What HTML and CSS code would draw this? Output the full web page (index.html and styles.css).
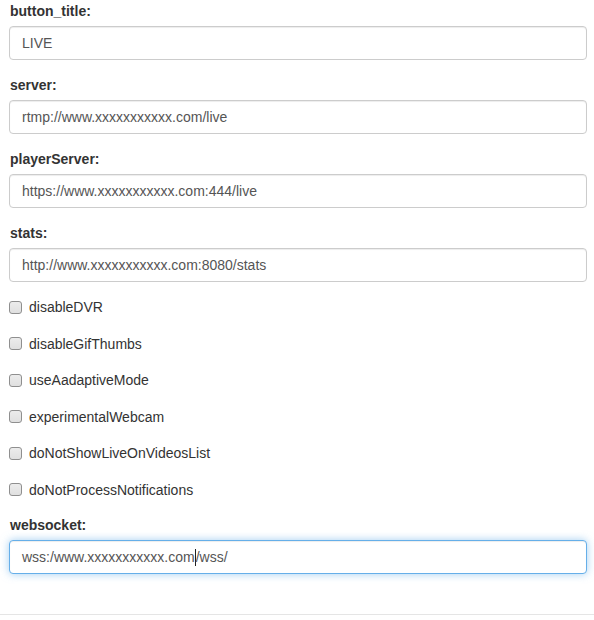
FILE: index.html
```html
<!DOCTYPE html>
<html lang="en">
<head>
<meta charset="utf-8">
<title>Live settings</title>
<link rel="stylesheet" href="styles.css">
</head>
<body>
<div class="panel">
  <form class="form">
    <div class="form-group">
      <label class="field-label" for="button_title">button_title:</label>
      <input class="form-control" id="button_title" type="text" value="LIVE">
    </div>
    <div class="form-group">
      <label class="field-label" for="server">server:</label>
      <input class="form-control" id="server" type="text" value="rtmp://www.xxxxxxxxxxx.com/live">
    </div>
    <div class="form-group">
      <label class="field-label" for="playerServer">playerServer:</label>
      <input class="form-control" id="playerServer" type="text" value="https://www.xxxxxxxxxxx.com:444/live">
    </div>
    <div class="form-group">
      <label class="field-label" for="stats">stats:</label>
      <input class="form-control" id="stats" type="text" value="http://www.xxxxxxxxxxx.com:8080/stats">
    </div>
    <div class="checks">
      <label class="check"><input type="checkbox" class="check-box"><span>disableDVR</span></label>
      <label class="check"><input type="checkbox" class="check-box"><span>disableGifThumbs</span></label>
      <label class="check"><input type="checkbox" class="check-box"><span>useAadaptiveMode</span></label>
      <label class="check"><input type="checkbox" class="check-box"><span>experimentalWebcam</span></label>
      <label class="check"><input type="checkbox" class="check-box"><span>doNotShowLiveOnVideosList</span></label>
      <label class="check"><input type="checkbox" class="check-box"><span>doNotProcessNotifications</span></label>
    </div>
    <div class="form-group last">
      <label class="field-label" for="websocket">websocket:</label>
      <div class="form-control focused" id="websocket" role="textbox">wss:/www.xxxxxxxxxxx.com<span class="caret"></span>/wss/</div>
    </div>
  </form>
  <div class="footer"></div>
</div>
</body>
</html>
```
FILE: styles.css
```css
html, body {
  margin: 0;
  padding: 0;
  background: #fff;
}
body {
  font-family: "Liberation Sans", Arial, sans-serif;
  font-size: 14px;
  line-height: 20px;
  color: #333;
}
.panel {
  width: 594px;
}
.form {
  padding: 1px 7px 0 9px;
  display: flex;
  flex-direction: column;
}
.form-group {
  display: flex;
  flex-direction: column;
  margin-bottom: 15px;
}
.form-group.last {
  margin-bottom: 40px;
}
.field-label {
  font-weight: bold;
  margin-bottom: 5px;
  padding-left: 1px;
  line-height: 20px;
}
.form-control {
  box-sizing: border-box;
  width: 100%;
  height: 34px;
  padding: 6px 12px;
  font-family: "Liberation Sans", Arial, sans-serif;
  font-size: 14px;
  line-height: 20px;
  color: #555;
  background: #fff;
  border: 1px solid #ccc;
  border-radius: 4px;
  box-shadow: inset 0 1px 1px rgba(0,0,0,0.075);
  outline: none;
  margin: 0;
}
.form-control.focused {
  border-color: #66afe9;
  box-shadow: inset 0 1px 1px rgba(0,0,0,0.075), 0 0 8px rgba(102,175,233,0.6);
  white-space: nowrap;
}
.caret {
  display: inline-block;
  width: 1px;
  height: 17px;
  background: #222;
  vertical-align: -4px;
}
.checks {
  display: flex;
  flex-direction: column;
  gap: 16.6px;
  margin-bottom: 15px;
}
.check {
  display: flex;
  align-items: center;
  height: 20px;
  color: #333;
  font-weight: normal;
}
.check-box {
  -webkit-appearance: none;
  appearance: none;
  box-sizing: border-box;
  width: 13px;
  height: 13px;
  margin: 0 7px 0 0;
  border: 1px solid #8f8f8f;
  border-radius: 3px;
  background: linear-gradient(#ececec, #e0e0e0);
  flex: none;
}
.footer {
  border-top: 1px solid #e5e5e5;
  height: 6px;
}
```
